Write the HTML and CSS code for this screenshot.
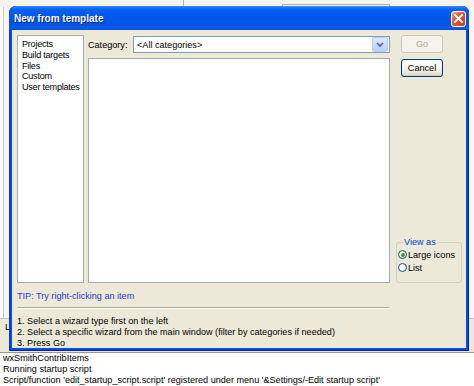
FILE: index.html
```html
<!DOCTYPE html>
<html lang="en">
<head>
    <meta charset="UTF-8">
    <title>New from template</title>
    <link rel="stylesheet" href="styles.css">
</head>
<body>
    <div class="ide">
        <div class="ide-top">
            <div class="ide-split"></div>
            <div class="ide-box"></div>
        </div>
        <div class="ide-side"></div>
        <div class="ide-tabs"><span class="tab-letter">L</span></div>
        <div class="ide-log">
            <div>wxSmithContribItems</div>
            <div>Running startup script</div>
            <div>Script/function 'edit_startup_script.script' registered under menu '&amp;Settings/-Edit startup script'</div>
        </div>
    </div>

    <div class="dialog">
        <div class="titlebar">
            <span class="title">New from template</span>
            <button class="close-btn" aria-label="Close">
                <svg width="9" height="9" viewBox="0 0 9 9"><path d="M1 1 L8 8 M8 1 L1 8" stroke="#fff" stroke-width="1.8" stroke-linecap="square"/></svg>
            </button>
        </div>
        <div class="dialog-body">
            <div class="main-row">
                <ul class="type-list">
                    <li>Projects</li>
                    <li>Build targets</li>
                    <li>Files</li>
                    <li>Custom</li>
                    <li>User templates</li>
                </ul>
                <div class="center-col">
                    <div class="category-row">
                        <span class="label">Category:</span>
                        <div class="combo">
                            <span class="combo-text">&lt;All categories&gt;</span>
                            <span class="combo-btn">
                                <svg width="8" height="6" viewBox="0 0 8 6"><path d="M1 1 L4 4 L7 1" fill="none" stroke="#4d6185" stroke-width="1.6"/></svg>
                            </span>
                        </div>
                    </div>
                    <div class="listview"></div>
                </div>
                <div class="right-col">
                    <button class="btn disabled">Go</button>
                    <button class="btn">Cancel</button>
                    <fieldset class="group">
                        <legend>View as</legend>
                        <label class="radio"><span class="dot checked"></span>Large icons</label>
                        <label class="radio"><span class="dot"></span>List</label>
                    </fieldset>
                </div>
            </div>
            <div class="tip">TIP: Try right-clicking an item</div>
            <div class="separator"></div>
            <div class="steps">
                <div>1. Select a wizard type first on the left</div>
                <div>2. Select a specific wizard from the main window (filter by categories if needed)</div>
                <div>3. Press Go</div>
            </div>
        </div>
    </div>
</body>
</html>
```

FILE: styles.css
```css
body {
    margin: 0;
    width: 474px;
    height: 386px;
    overflow: hidden;
    position: relative;
    font-family: "Liberation Sans", Arial, sans-serif;
    font-size: 9.1px;
    color: #000;
    background: #fff;
}

/* IDE behind the dialog */
.ide {
    display: grid;
    grid-template-rows: 7px 311px 34px 1fr;
    height: 386px;
}

.ide-top {
    position: relative;
    background: #f4f3ee;
}

.ide-split {
    position: absolute;
    left: 183px;
    top: 0;
    width: 1px;
    height: 7px;
    background: #b5b2a4;
}

.ide-box {
    position: absolute;
    left: 282px;
    top: 4px;
    width: 106px;
    height: 3px;
    border-top: 1px solid #b5b2a4;
    border-left: 1px solid #b5b2a4;
    border-right: 1px solid #b5b2a4;
}

.ide-side {
    background: #f7f6f2;
    border-left: 3px solid #fff;
    box-shadow: inset 1px 0 0 #c8c5b8;
}

.ide-tabs {
    background: #ece9d8;
    border-top: 1px solid #c8c5b8;
    padding: 2px 0 0 5px;
}

.tab-letter {
    display: inline-block;
    margin-top: 1px;
}

.ide-log {
    border-top: 1px solid #9c9a8f;
    padding: 0 0 0 3px;
    line-height: 10.8px;
    white-space: nowrap;
}

/* the dialog window */
.dialog {
    position: absolute;
    left: 9px;
    top: 6px;
    width: 460px;
    height: 345px;
    display: flex;
    flex-direction: column;
    background: #0050e0;
    border-radius: 7px 7px 0 0;
    box-sizing: border-box;
    padding: 0 3px 3px 3px;
    box-shadow: inset 1px 0 0 #0831d9, inset -1px 0 0 #001ea0, inset 0 -1px 0 #001ea0;
}

.titlebar {
    flex-shrink: 0;
    height: 24px;
    margin: 0 -3px;
    padding: 0 3px 0 5px;
    display: flex;
    align-items: center;
    justify-content: space-between;
    border-radius: 7px 7px 0 0;
    background: linear-gradient(#3a8cff 0%, #0a64f0 12%, #0058ee 35%, #0054e8 75%, #0a5ee8 92%, #0048c8 100%);
}

.title {
    color: #fff;
    font-weight: bold;
    font-size: 10px;
    text-shadow: 1px 1px 0 #0a1f80;
}

.close-btn {
    width: 15px;
    height: 16px;
    margin-top: 1px;
    padding: 0;
    display: flex;
    align-items: center;
    justify-content: center;
    border: 1px solid #fff;
    border-radius: 3px;
    background: linear-gradient(135deg, #f0a08a 0%, #e2583c 40%, #c83c1c 100%);
}

.dialog-body {
    flex: 1;
    min-height: 0;
    overflow: hidden;
    background: #ece9d8;
    padding: 5px 4px 0 5px;
    display: flex;
    flex-direction: column;
}

.main-row {
    flex-shrink: 0;
    display: flex;
    height: 248px;
}

.type-list {
    list-style: none;
    margin: 0;
    width: 67px;
    height: 248px;
    box-sizing: border-box;
    padding: 3px 1px 3px 4px;
    background: #fff;
    border: 1px solid #a5acb5;
    line-height: 10.8px;
    letter-spacing: -0.25px;
    white-space: nowrap;
    overflow: hidden;
}

.center-col {
    width: 302px;
    margin-left: 4px;
    display: flex;
    flex-direction: column;
    gap: 5px;
    padding-top: 1px;
}

.category-row {
    display: flex;
    align-items: center;
    gap: 4px;
    height: 17px;
}

.label {
    width: 41px;
    white-space: nowrap;
}

.combo {
    flex: 1;
    height: 17px;
    box-sizing: border-box;
    border: 1px solid #7f9db9;
    background: #fff;
    display: flex;
    align-items: center;
    justify-content: space-between;
    padding: 0 1px 0 3px;
}

.combo-btn {
    width: 14px;
    height: 13px;
    display: flex;
    align-items: center;
    justify-content: center;
    border: 1px solid #b9cdf5;
    border-radius: 2px;
    background: linear-gradient(#dfe9fd, #bccff7);
}

.listview {
    height: 225px;
    box-sizing: border-box;
    background: #fff;
    border: 1px solid #a5acb5;
}

.right-col {
    width: 66px;
    margin-left: 6px;
    display: flex;
    flex-direction: column;
    align-items: flex-start;
}

.btn {
    margin-left: 5px;
    width: 42px;
    height: 18px;
    padding: 0;
    font-family: "Liberation Sans", Arial, sans-serif;
    font-size: 9.1px;
    color: #000;
    border: 1px solid #003c74;
    border-radius: 3px;
    background: linear-gradient(#ffffff, #f2f1ea 60%, #dcd9cb);
    box-shadow: inset 0 -1px 0 #cfcbbb;
}

.btn + .btn {
    margin-top: 6px;
}

.btn.disabled {
    color: #aca899;
    border-color: #c9c7ba;
    background: #f5f4ea;
    box-shadow: none;
}

.group {
    margin: auto 0 0 0;
    width: 66px;
    height: 46px;
    box-sizing: border-box;
    padding: 1px 1px 0 1px;
    border: 1px solid #d0d0bf;
    border-radius: 3px;
    white-space: nowrap;
}

.group legend {
    color: #0046d5;
    padding: 0 1px;
    margin-left: 5px;
}

.radio {
    display: flex;
    align-items: center;
    gap: 1px;
    height: 13px;
}

.dot {
    flex-shrink: 0;
    width: 7px;
    height: 7px;
    border-radius: 50%;
    border: 1px solid #1c5180;
    background: radial-gradient(#fff 40%, #dcdbd2);
    position: relative;
}

.dot.checked::after {
    content: "";
    position: absolute;
    left: 1.5px;
    top: 1.5px;
    width: 4px;
    height: 4px;
    border-radius: 50%;
    background: #2aa52a;
}

.tip {
    flex-shrink: 0;
    margin-top: 8px;
    color: #2b38d6;
    line-height: 11px;
}

.separator {
    flex-shrink: 0;
    margin-top: 5px;
    width: 372px;
    height: 0;
    border-top: 1px solid #aca899;
    border-bottom: 1px solid #fff;
}

.steps {
    margin-top: 7px;
    line-height: 10.8px;
}
```
